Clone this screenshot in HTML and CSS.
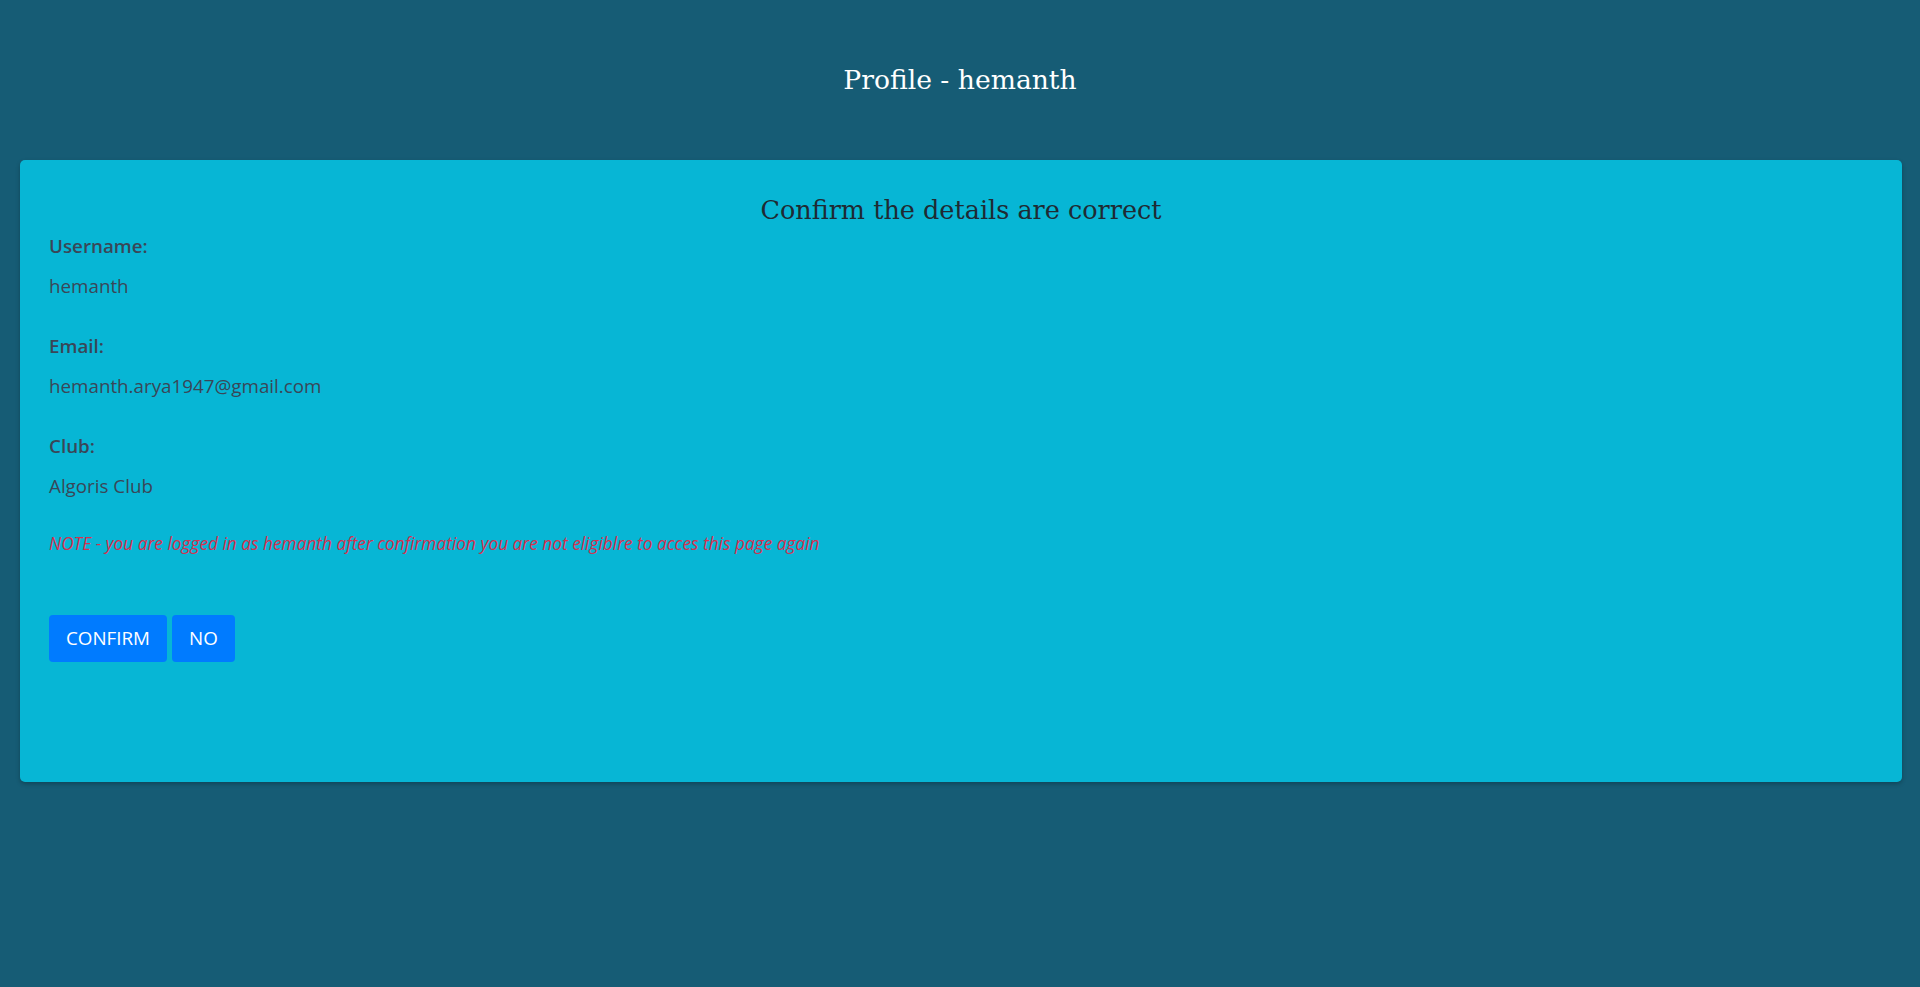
FILE: index.html
```html
<!DOCTYPE html>
<html lang="en">
<head>
<meta charset="utf-8">
<title>Profile - hemanth</title>
<link rel="stylesheet" href="styles.css">
</head>
<body>
<header class="page-header">
  <h1 class="page-title">Profile - hemanth</h1>
</header>
<main class="card">
  <h2 class="card-title">Confirm the details are correct</h2>
  <div class="field">
    <div class="field-label">Username:</div>
    <div class="field-value">hemanth</div>
  </div>
  <div class="field">
    <div class="field-label">Email:</div>
    <div class="field-value">hemanth.arya1947@gmail.com</div>
  </div>
  <div class="field">
    <div class="field-label">Club:</div>
    <div class="field-value">Algoris Club</div>
  </div>
  <p class="note">NOTE - you are logged in as hemanth after confirmation you are not eligiblre to acces this page again</p>
  <div class="actions">
    <button class="btn" type="button">CONFIRM</button>
    <button class="btn" type="button">NO</button>
  </div>
</main>
</body>
</html>
```

FILE: styles.css
```css
html, body {
  margin: 0;
  padding: 0;
}
body {
  background: #165c75;
  font-family: "Open Sans", "Noto Sans", sans-serif;
  min-height: 987px;
}
.page-header {
  padding-top: 60px;
}
.page-title {
  margin: 0;
  text-align: center;
  color: #ffffff;
  font-family: "DejaVu Serif", "Liberation Serif", serif;
  font-weight: normal;
  font-size: 26.6px;
  line-height: 40px;
}
.card {
  display: block;
  margin: 60px 18px 0 20px;
  padding: 32px 29px 120px;
  background: #07b6d5;
  border-radius: 5px;
  box-shadow: 0 2px 4px rgba(0, 0, 0, 0.25);
}
.card-title {
  margin: 0;
  text-align: center;
  color: #1f2a33;
  font-family: "DejaVu Serif", "Liberation Serif", serif;
  font-weight: normal;
  font-size: 25.5px;
  line-height: 36px;
}
.field {
  margin-top: 24px;
  color: #3a4657;
  font-size: 18.8px;
}
.field:first-of-type {
  margin-top: 0;
}
.field-label {
  font-weight: 600;
  line-height: 36px;
}
.field-value {
  margin-top: 4px;
  line-height: 36px;
}
.note {
  margin: 28px 0 0;
  color: #d6304f;
  font-style: italic;
  font-size: 17.3px;
  line-height: 24px;
}
.actions {
  display: flex;
  gap: 5px;
  margin-top: 59px;
}
.btn {
  height: 47px;
  padding: 0 17px;
  border: none;
  border-radius: 4px;
  background: #007bff;
  color: #ffffff;
  font-family: "Open Sans", "Noto Sans", sans-serif;
  font-size: 18.8px;
  line-height: 47px;
}
```
